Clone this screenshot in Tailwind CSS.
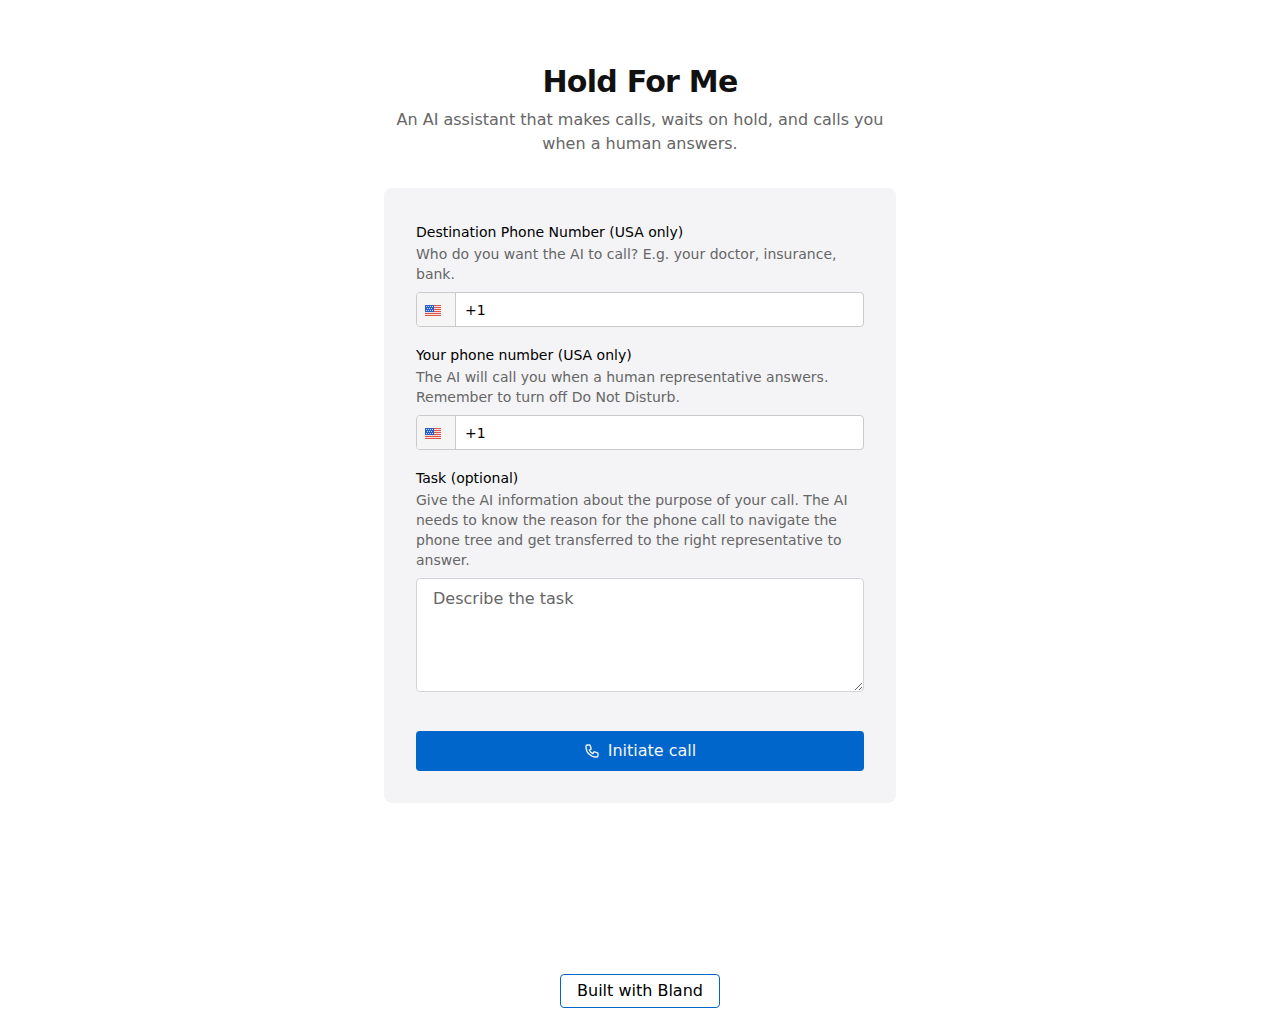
<!DOCTYPE html>
<html lang="en">

<head>
  <meta charset="UTF-8" />
  <meta name="viewport" content="width=device-width, initial-scale=1.0" />
  <title>Hold For Me</title>
  <script src="https://cdn.jsdelivr.net/npm/@tailwindcss/browser@4"></script>
</head>

<body class="bg-white font-['DejaVu_Sans',sans-serif] text-black min-h-screen flex flex-col items-center">

  <!-- Flag shared by the phone inputs -->
  <svg class="hidden">
    <symbol id="flag-us" viewBox="0 0 16 11">
      <rect width="16" height="11" fill="#fbdcd6" />
      <path d="M0 .5h16M0 2.5h16M0 4.5h16M0 6.5h16M0 8.5h16M0 10.5h16" stroke="#d8584f" stroke-width="1" />
      <rect width="9" height="7" fill="#2a5fd0" />
      <path d="M1 1.5h1M3 1.5h1M5 1.5h1M7 1.5h1M2 3.5h1M4 3.5h1M6 3.5h1M1 5.5h1M3 5.5h1M5 5.5h1M7 5.5h1" stroke="#c8dcff" stroke-width="1" />
    </symbol>
  </svg>

  <main class="flex-grow w-full max-w-lg pt-16">
    <!-- Heading -->
    <header class="text-center mb-8">
      <h1 class="text-3xl font-bold tracking-tight text-[#111111] mb-2">Hold For Me</h1>
      <p class="text-base text-[#666666]">An AI assistant that makes calls, waits on hold, and calls you when a human answers.</p>
    </header>

    <!-- Call form -->
    <form class="bg-[#f4f4f6] rounded-lg p-8">
      <div class="mb-4">
        <label for="destination" class="block text-sm leading-6">Destination Phone Number (USA only)</label>
        <p class="text-sm text-[#666666] mb-2">Who do you want the AI to call? E.g. your doctor, insurance, bank.</p>
        <div class="flex h-[35px] bg-white border border-[#cacaca] rounded overflow-hidden">
          <button type="button" aria-label="Country: United States" class="w-[39px] shrink-0 pl-2 pt-0.5 bg-[#f5f5f5] border-r border-[#cacaca]">
            <svg class="w-4 h-[11px]"><use href="#flag-us" /></svg>
          </button>
          <input type="tel" id="destination" name="destination" value="+1" class="flex-1 min-w-0 px-[9px] text-sm focus:outline-none" />
        </div>
      </div>

      <div class="mb-4">
        <label for="phone" class="block text-sm leading-6">Your phone number (USA only)</label>
        <p class="text-sm text-[#666666] mb-2">The AI will call you when a human representative answers. Remember to turn off Do Not Disturb.</p>
        <div class="flex h-[35px] bg-white border border-[#cacaca] rounded overflow-hidden">
          <button type="button" aria-label="Country: United States" class="w-[39px] shrink-0 pl-2 pt-0.5 bg-[#f5f5f5] border-r border-[#cacaca]">
            <svg class="w-4 h-[11px]"><use href="#flag-us" /></svg>
          </button>
          <input type="tel" id="phone" name="phone" value="+1" class="flex-1 min-w-0 px-[9px] text-sm focus:outline-none" />
        </div>
      </div>

      <div class="mb-8">
        <label for="task" class="block text-sm leading-6">Task (optional)</label>
        <p class="text-sm text-[#666666] mb-2">Give the AI information about the purpose of your call. The AI needs to know the reason for the phone call to navigate the phone tree and get transferred to the right representative to answer.</p>
        <textarea id="task" name="task" rows="4" placeholder="Describe the task"
          class="w-full px-4 py-2 bg-white border border-[#d4d4d8] rounded text-base placeholder-[#666666]"></textarea>
      </div>

      <button type="submit" class="w-full h-10 flex items-center justify-center gap-2 bg-[#0066cc] hover:bg-[#0058b0] text-[#f4f4f6] rounded">
        <svg class="w-4 h-4" viewBox="0 0 24 24" fill="none" stroke="currentColor" stroke-width="2" stroke-linecap="round" stroke-linejoin="round" aria-hidden="true">
          <path d="M3 5a2 2 0 012-2h3.28a1 1 0 01.948.684l1.498 4.493a1 1 0 01-.502 1.21l-2.257 1.13a11.042 11.042 0 005.516 5.516l1.13-2.257a1 1 0 011.21-.502l4.493 1.498a1 1 0 01.684.949V19a2 2 0 01-2 2h-1C9.716 21 3 14.284 3 6V5z" />
        </svg>
        Initiate call
      </button>
    </form>
  </main>

  <!-- Footer -->
  <footer class="py-4">
    <a href="https://www.bland.ai" class="block px-4 py-1 bg-white border border-[#0066cc] rounded">Built with Bland</a>
  </footer>

</body>

</html>
